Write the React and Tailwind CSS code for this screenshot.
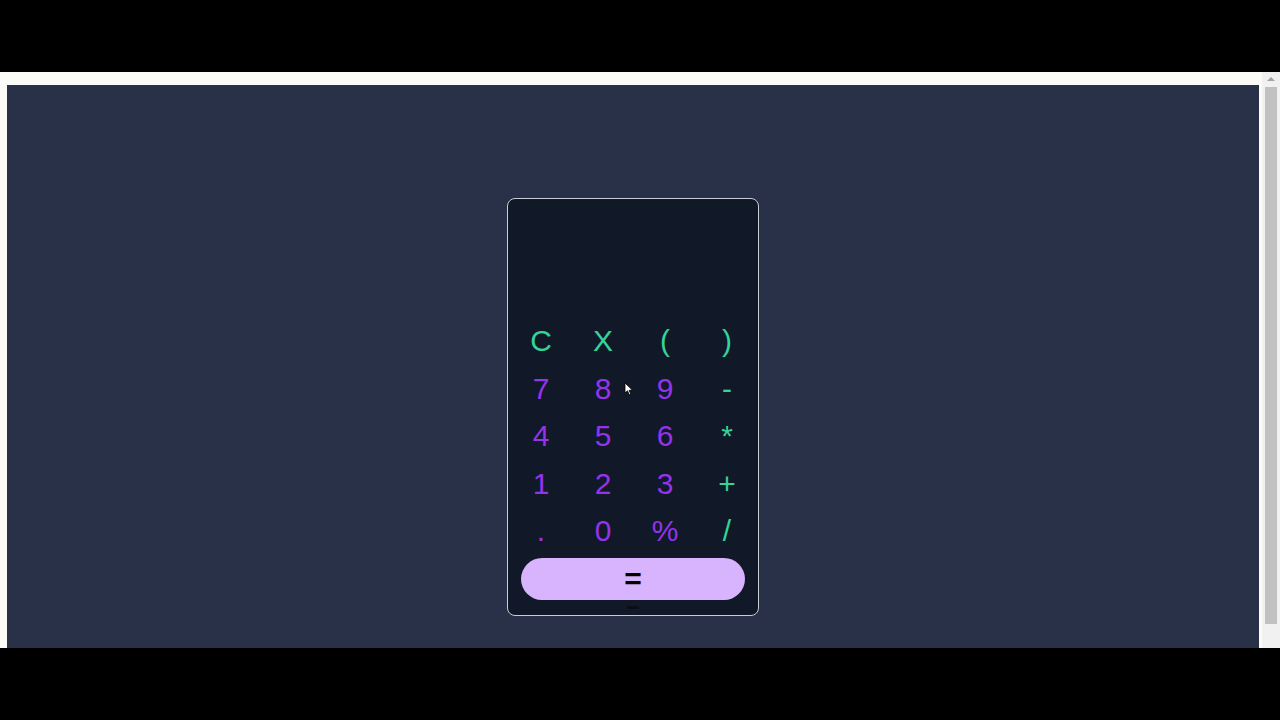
import React from "react";

const rows = [
  [["C", "g"], ["X", "g"], ["(", "g"], [")", "g"]],
  [["7", "p"], ["8", "p"], ["9", "p"], ["-", "g"]],
  [["4", "p"], ["5", "p"], ["6", "p"], ["*", "g"]],
  [["1", "p"], ["2", "p"], ["3", "p"], ["+", "g"]],
  [[".", "p"], ["0", "p"], ["%", "p"], ["/", "g"]],
];

export default function App() {
  return (
    <div
      className="w-[1280px] h-[720px] bg-black flex flex-col overflow-hidden"
      style={{ fontFamily: '"Liberation Sans", Arial, sans-serif' }}
    >
      <div className="h-[72px] shrink-0" />
      <div className="h-[576px] shrink-0 bg-[#fbfbf8] flex">
        <div className="flex-1 pt-[13px] pl-[7px] pr-[3px]">
          <div className="h-full bg-[#293148] flex justify-center pt-[113px] relative">
            <div className="w-[252px] h-[418px] border border-[#c9ccd4] rounded-[8px] bg-[#111827] flex flex-col">
              <div className="h-[118px] shrink-0" />
              <div className="flex flex-col">
                {rows.map((row, i) => (
                  <div key={i} className="grid grid-cols-4 h-[47.5px] pl-[2px]">
                    {row.map(([t, c]) => (
                      <button
                        key={t}
                        className={
                          "text-[30px] leading-[47.5px] text-center " +
                          (c === "g" ? "text-[#34d399]" : "text-[#9333ea]")
                        }
                      >
                        {t}
                      </button>
                    ))}
                  </div>
                ))}
              </div>
              <button className="mt-[3.5px] mx-auto w-[224px] h-[42px] rounded-full bg-[#d8b4fe] text-black text-[30px] font-bold leading-[42px] text-center">
                =
              </button>
              <div className="mx-auto mt-[6px] w-[12px] h-[3px] rounded-full bg-[#0b0e15]" />
            </div>
            <svg
              className="absolute left-[617px] top-[297px]"
              width="10"
              height="14"
              viewBox="0 0 10 14"
            >
              <path d="M1 1 L1 11 L3.5 8.8 L5.3 12.8 L6.8 12.1 L5.1 8.3 L8.4 8.1 Z" fill="#ffffff" stroke="#000000" strokeWidth="0.8" />
            </svg>
          </div>
        </div>
        <div className="w-[18px] shrink-0 bg-[#f1f1f1] flex flex-col items-center">
          <div className="h-[14px] flex items-center justify-center">
            <div className="w-0 h-0 border-l-[4px] border-r-[4px] border-b-[4px] border-l-transparent border-r-transparent border-b-[#a3a3a3]" />
          </div>
          <div className="w-[12px] h-[537px] mt-[1px] bg-[#c1c1c1]" />
        </div>
      </div>
      <div className="flex-1" />
    </div>
  );
}
